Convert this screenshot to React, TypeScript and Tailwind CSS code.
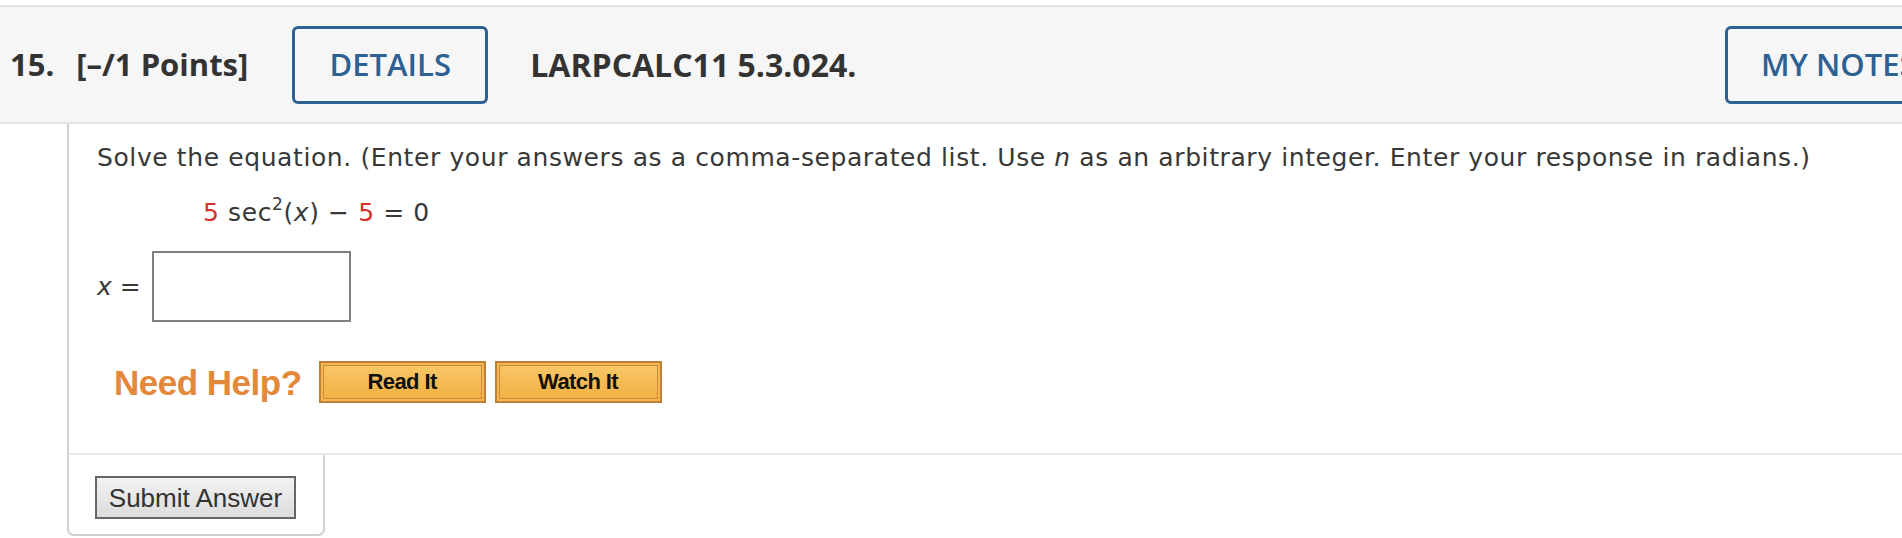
import React from 'react';

const body = { fontFamily: '"DejaVu Sans", Verdana, sans-serif' };
const head = { fontFamily: '"Open Sans", sans-serif' };
const helv = { fontFamily: '"Liberation Sans", Arial, sans-serif' };

const HelpButton: React.FC<{ label: string }> = ({ label }) => (
  <button
    className="h-[42px] w-[167px] border-2 border-[#c07f3a] bg-[#f5b94e] p-[2px]"
    style={helv}
  >
    <span className="flex h-full w-full items-center justify-center border border-[#c98a3f] bg-gradient-to-b from-[#f8c765] to-[#f2b143] text-[22px] font-bold leading-none tracking-[-0.6px] text-[#111]">
      {label}
    </span>
  </button>
);

const App: React.FC = () => {
  return (
    <div className="h-[538px] w-[1902px] overflow-hidden bg-white">
      {/* Question header */}
      <div className="mt-[5px] border-t-2 border-[#e2e2e2]" />
      <div
        className="flex h-[117px] items-center border-b-2 border-[#e2e2e2] bg-[#f6f6f6] text-[#333]"
        style={head}
      >
        <span className="ml-[10px] text-[31px] font-bold">15.</span>
        <span className="ml-[22px] text-[31px] font-bold">[–/1 Points]</span>
        <button className="ml-[44px] h-[78px] w-[196px] rounded-[6px] border-[3px] border-[#2d6093] text-[31px] font-semibold text-[#2d6093]">
          DETAILS
        </button>
        <span className="ml-[42px] text-[32px] font-bold">LARPCALC11 5.3.024.</span>
        <button className="ml-auto mr-[-40px] h-[78px] w-[217px] shrink-0 rounded-[6px] border-[3px] border-[#2d6093] text-left text-[31px] font-semibold text-[#2d6093]">
          <span className="pl-[33px]">MY NOTES</span>
        </button>
      </div>

      {/* Question body */}
      <div
        className="ml-[67px] border-b-2 border-l-2 border-[#e8e8e8] border-l-[#cfcfcf] pb-[50px] pl-[28px] pt-[19px] text-[#383838]"
        style={body}
      >
        <p className="h-[30px] whitespace-nowrap text-[25px] leading-[30px] tracking-[0.6px]">
          Solve the equation. (Enter your answers as a comma-separated list. Use <i>n</i> as an arbitrary integer. Enter your response in radians.)
        </p>
        <p className="ml-[106px] mt-[25px] h-[30px] text-[25px] leading-[30px] tracking-[0.6px]">
          <span className="text-[#d9302a]">5</span> sec<sup className="relative -top-[11px] text-[17px]">2</sup>(<i>x</i>) − <span className="text-[#d9302a]">5</span> = 0
        </p>
        <div className="mt-[23px] flex items-center">
          <span className="text-[25px] leading-[30px]">
            <i>x</i> =
          </span>
          <input className="ml-[11px] h-[71px] w-[199px] border-2 border-[#808080] bg-white" />
        </div>
        <div className="mt-[39px] flex h-[42px] items-center">
          <span
            className="ml-[17px] text-[35px] font-bold leading-none tracking-[-0.5px] text-[#e4883a]"
            style={helv}
          >
            Need Help?
          </span>
          <div className="ml-[17px] flex gap-[9px]">
            <HelpButton label="Read It" />
            <HelpButton label="Watch It" />
          </div>
        </div>
      </div>

      {/* Submit */}
      <div className="ml-[67px] h-[81px] w-[258px] rounded-b-[7px] border-2 border-t-0 border-[#cfcfcf] pl-[26px] pt-[21px]">
        <button
          className="h-[43px] w-[201px] border-2 border-[#666] bg-gradient-to-b from-[#f2f2f2] to-[#dcdcdc] text-[26px] leading-none text-[#333]"
          style={helv}
        >
          Submit Answer
        </button>
      </div>
    </div>
  );
};

export default App;
